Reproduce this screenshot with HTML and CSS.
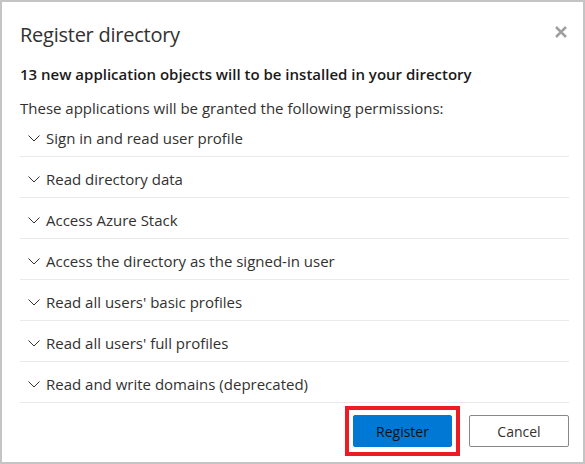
FILE: index.html
```html
<!DOCTYPE html>
<html lang="en">
<head>
    <meta charset="UTF-8">
    <meta name="viewport" content="width=device-width, initial-scale=1.0">
    <title>Register directory</title>
    <link rel="stylesheet" href="styles.css">
</head>
<body>
    <div class="dialog">
        <div class="dialog-header">
            <h1>Register directory</h1>
            <span class="close" aria-label="Close">
                <svg width="12" height="12" viewBox="0 0 12 12">
                    <path d="M1 1 L11 11 M11 1 L1 11" stroke="#a0a0a0" stroke-width="2.5" fill="none"/>
                </svg>
            </span>
        </div>

        <p class="summary">13 new application objects will to be installed in your directory</p>
        <p class="intro">These applications will be granted the following permissions:</p>

        <ul class="permissions">
            <li><svg class="chevron" width="12" height="7" viewBox="0 0 12 7"><path d="M0.5 0.5 L6 6 L11.5 0.5"/></svg>Sign in and read user profile</li>
            <li><svg class="chevron" width="12" height="7" viewBox="0 0 12 7"><path d="M0.5 0.5 L6 6 L11.5 0.5"/></svg>Read directory data</li>
            <li><svg class="chevron" width="12" height="7" viewBox="0 0 12 7"><path d="M0.5 0.5 L6 6 L11.5 0.5"/></svg>Access Azure Stack</li>
            <li><svg class="chevron" width="12" height="7" viewBox="0 0 12 7"><path d="M0.5 0.5 L6 6 L11.5 0.5"/></svg>Access the directory as the signed-in user</li>
            <li><svg class="chevron" width="12" height="7" viewBox="0 0 12 7"><path d="M0.5 0.5 L6 6 L11.5 0.5"/></svg>Read all users' basic profiles</li>
            <li><svg class="chevron" width="12" height="7" viewBox="0 0 12 7"><path d="M0.5 0.5 L6 6 L11.5 0.5"/></svg>Read all users' full profiles</li>
            <li><svg class="chevron" width="12" height="7" viewBox="0 0 12 7"><path d="M0.5 0.5 L6 6 L11.5 0.5"/></svg>Read and write domains (deprecated)</li>
        </ul>

        <div class="dialog-footer">
            <div class="highlight">
                <button class="btn btn-primary">Register</button>
            </div>
            <button class="btn btn-default">Cancel</button>
        </div>
    </div>
</body>
</html>
```

FILE: styles.css
```css
body {
    margin: 0;
    font-family: "Open Sans", "Noto Sans", sans-serif;
    color: #323130;
    background-color: #ffffff;
}

.dialog {
    width: 585px;
    height: 464px;
    box-sizing: border-box;
    border: 2px solid #c4c4c4;
    padding: 19px 14px 0 18px;
    background-color: #ffffff;
}

.dialog-header {
    display: flex;
    justify-content: space-between;
    align-items: flex-start;
}

.dialog-header h1 {
    margin: 0;
    font-size: 20px;
    font-weight: 400;
    line-height: 28px;
    letter-spacing: -0.25px;
}

.close {
    display: flex;
    margin-top: 5px;
    margin-right: 2px;
}

.summary {
    margin: 15px 0 0;
    font-size: 15px;
    font-weight: 600;
    line-height: 20px;
    color: #1b1a19;
}

.intro {
    margin: 14px 0 0;
    font-size: 15px;
    line-height: 20px;
}

.permissions {
    list-style: none;
    margin: 0;
    padding: 0;
}

.permissions li {
    display: flex;
    align-items: center;
    padding: 12px 0 8px;
    line-height: 20px;
    border-bottom: 1px solid #eaeaea;
    font-size: 15px;
}

.permissions li:first-child {
    padding-top: 10px;
    padding-bottom: 8px;
}

.chevron {
    flex: none;
    margin: 1px 6px 0 8px;
    fill: none;
    stroke: #323130;
    stroke-width: 1;
}

.dialog-footer {
    display: flex;
    justify-content: flex-end;
    align-items: center;
    gap: 9px;
    margin-top: 3px;
}

.highlight {
    border: 4px solid #ed1c24;
    padding: 5px 4px;
}

.btn {
    width: 100px;
    height: 32px;
    border-radius: 2px;
    font-family: "Open Sans", "Noto Sans", sans-serif;
    font-size: 14px;
    cursor: pointer;
}

.btn-primary {
    display: block;
    width: 99px;
    background-color: #0078d4;
    border: 1px solid #0078d4;
    color: #111111;
}

.btn-default {
    background-color: #ffffff;
    border: 1px solid #8a8886;
    color: #323130;
}
```
